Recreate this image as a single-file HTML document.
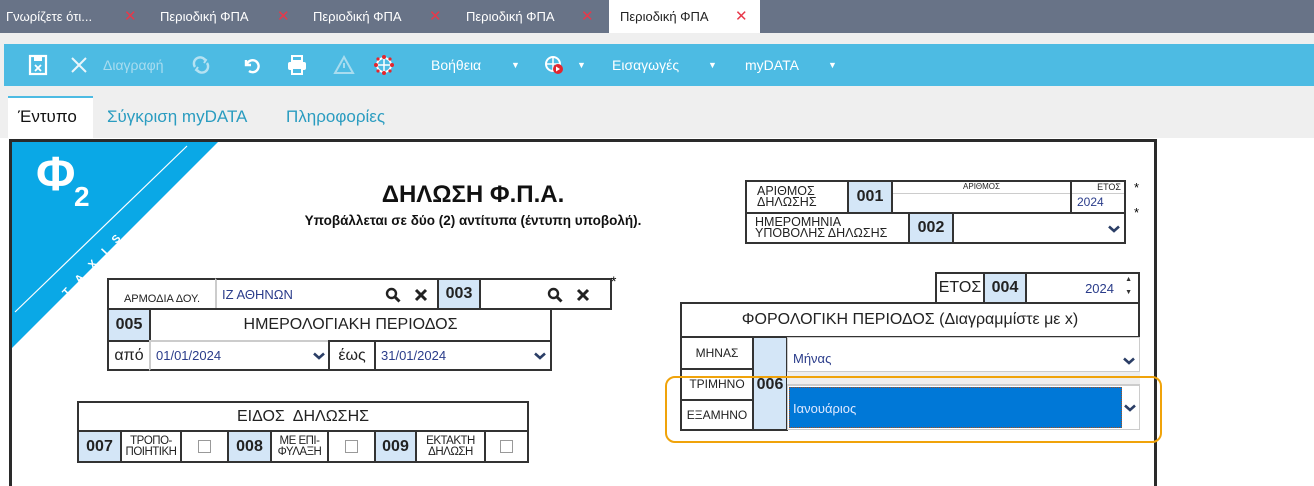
<!DOCTYPE html>
<html><head><meta charset="utf-8"><style>
*{margin:0;padding:0;box-sizing:border-box}
html,body{width:1314px;height:486px;overflow:hidden}
body{background:#efefef;font-family:"Liberation Sans","DejaVu Sans",sans-serif;position:relative}
.a{position:absolute}
.t{color:#fff;font-size:13px;top:9px;position:absolute}
.x{color:#e8384a;font-size:15px;font-weight:bold;top:7px;position:absolute}
.tb{color:#fff;font-size:14px;position:absolute;top:57px}
.c{position:absolute;border:2px solid #333;background:#fff;display:flex;align-items:center;justify-content:center;color:#222;text-align:center}
.n{background:#d4e6f7;font-weight:bold;font-size:16px}
.in{color:#2a3c8a;font-size:13px;justify-content:flex-start;padding-left:5px}
.sm{font-size:11.5px;line-height:11px;letter-spacing:-0.5px}
.cb{width:13px;height:13px;border:1px solid #999;background:#fff}
.chev{position:absolute}
</style></head><body>
<div class="a" style="left:0;top:0;width:1314px;height:33px;background:#687387"></div>
<div class="a" style="left:609px;top:0;width:151px;height:33px;background:#fff"></div>
<span class="t" style="left:6px">Γνωρίζετε ότι...</span><span class="x" style="left:124px">✕</span>
<span class="t" style="left:160px">Περιοδική ΦΠΑ</span><span class="x" style="left:277px">✕</span>
<span class="t" style="left:313px">Περιοδική ΦΠΑ</span><span class="x" style="left:429px">✕</span>
<span class="t" style="left:466px">Περιοδική ΦΠΑ</span><span class="x" style="left:581px">✕</span>
<span class="t" style="left:620px;color:#222">Περιοδική ΦΠΑ</span><span class="x" style="left:735px">✕</span>
<div class="a" style="left:4px;top:44px;width:1310px;height:42px;background:#4dbbe3"></div>
<svg class="a" style="left:28px;top:54px" width="20" height="22" viewBox="0 0 20 22"><rect x="2" y="2" width="16" height="18" fill="none" stroke="#fff" stroke-width="2.2"/><rect x="6" y="2" width="8" height="5" fill="#fff"/><path d="M7 11l6 6M13 11l-6 6" stroke="#fff" stroke-width="1.8"/></svg>
<svg class="a" style="left:71px;top:57px" width="16" height="16"><path d="M1 1l14 14M15 1L1 15" stroke="#eaf6fb" stroke-width="2"/></svg>
<span class="tb" style="left:103px;color:#a8dcef">Διαγραφή</span>
<svg class="a" style="left:191px;top:55px" width="20" height="20"><path d="M4 12a6 6 0 0 1 10-7M16 8a6 6 0 0 1-10 7" stroke="#b5e2f2" stroke-width="2.4" fill="none"/><path d="M12 3l3 2-2 3M8 17l-3-2 2-3" stroke="#b5e2f2" stroke-width="2" fill="none"/></svg>
<svg class="a" style="left:241px;top:55px" width="20" height="20"><path d="M5 5v5h5M6 9a6 6 0 1 1 2 7" stroke="#fff" stroke-width="2.4" fill="none"/></svg>
<svg class="a" style="left:286px;top:54px" width="22" height="22"><rect x="6" y="2" width="10" height="5" fill="none" stroke="#fff" stroke-width="2"/><rect x="2" y="8" width="18" height="8" rx="2" fill="#fff"/><rect x="6" y="14" width="10" height="6" fill="#4dbbe3" stroke="#fff" stroke-width="2"/></svg>
<svg class="a" style="left:333px;top:55px" width="22" height="20"><path d="M11 2L20 18H2Z" stroke="#a8dcef" stroke-width="2" fill="none"/><path d="M11 8v5" stroke="#a8dcef" stroke-width="2"/></svg>
<svg class="a" style="left:373px;top:54px" width="22" height="22"><circle cx="11" cy="11" r="7" stroke="#fff" stroke-width="2" fill="none"/><path d="M4 11h14M11 4v14" stroke="#fff" stroke-width="1.5"/><g fill="#e3262e"><circle cx="11" cy="3" r="2"/><circle cx="11" cy="19" r="2"/><circle cx="3" cy="11" r="2"/><circle cx="19" cy="11" r="2"/><circle cx="5" cy="5" r="1.6"/><circle cx="17" cy="17" r="1.6"/><circle cx="17" cy="5" r="1.6"/><circle cx="5" cy="17" r="1.6"/></g></svg>
<span class="tb" style="left:431px">Βοήθεια</span><span class="tb" style="left:511px;font-size:9px;top:60px">▼</span>
<svg class="a" style="left:543px;top:54px" width="22" height="22"><circle cx="10" cy="10" r="7" stroke="#fff" stroke-width="2" fill="none"/><path d="M3 10h14M10 3v14" stroke="#fff" stroke-width="1.5"/><circle cx="15" cy="15" r="5" fill="#e3262e"/><path d="M13 12.5v5l4-2.5z" fill="#fff"/></svg>
<span class="tb" style="left:577px;font-size:9px;top:60px">▼</span>
<span class="tb" style="left:612px">Εισαγωγές</span><span class="tb" style="left:708px;font-size:9px;top:60px">▼</span>
<span class="tb" style="left:745px">myDATA</span><span class="tb" style="left:828px;font-size:9px;top:60px">▼</span>
<div class="a" style="left:8px;top:96px;width:85px;height:42px;background:#fff;border-top:2px solid #4dbbe3"></div>
<span class="a" style="left:18px;top:107px;font-size:17px;color:#111">Έντυπο</span>
<span class="a" style="left:107px;top:107px;font-size:17px;color:#2a9cc0">Σύγκριση myDATA</span>
<span class="a" style="left:286px;top:107px;font-size:17px;color:#2a9cc0">Πληροφορίες</span>
<div class="a" style="left:0;top:138px;width:1314px;height:348px;background:#fff"></div>
<div class="a" style="left:9px;top:139px;width:1148px;height:360px;border:3px solid #2a2a2a;background:#fff"></div>
<svg class="a" style="left:12px;top:142px" width="210" height="210"><polygon points="0,0 206,0 0,206" fill="#0aa8e6"/><line x1="175" y1="4" x2="3" y2="170" stroke="#fff" stroke-width="1.2"/><text x="24" y="48" fill="#fff" font-size="48" font-weight="bold" font-family="Liberation Sans Narrow, Liberation Sans" transform="scale(1,1)">Φ</text><text x="62" y="64" fill="#fff" font-size="28" font-weight="bold" font-family="Liberation Sans">2</text><text transform="translate(55,155) rotate(-47)" fill="#fff" font-size="11" font-weight="bold" letter-spacing="12" font-family="Liberation Sans">TAXIS</text></svg>
<div class="a" style="left:300px;top:181px;width:346px;text-align:center;font-size:24px;font-weight:bold;color:#111">ΔΗΛΩΣΗ Φ.Π.Α.</div>
<div class="a" style="left:280px;top:213px;width:386px;text-align:center;font-size:13.5px;font-weight:bold;color:#111">Υποβάλλεται σε δύο (2) αντίτυπα (έντυπη υποβολή).</div>
<svg width="0" height="0" style="position:absolute"><defs>
<symbol id="cv" viewBox="0 0 12 8"><path d="M1 1.5l5 4.5 5-4.5" stroke="#2b3e66" stroke-width="2.6" fill="none"/></symbol>
<symbol id="sr" viewBox="0 0 16 16"><circle cx="6.5" cy="6.5" r="4.5" stroke="#222" stroke-width="2.4" fill="none"/><path d="M10 10l4.5 4.5" stroke="#222" stroke-width="3"/></symbol>
<symbol id="xx" viewBox="0 0 14 14"><path d="M2 2l10 10M12 2L2 12" stroke="#222" stroke-width="3"/></symbol>
</defs></svg>
<div class="c" style="left:107px;top:278px;width:110px;height:32px;font-size:11px;align-items:flex-end;padding-bottom:3px">ΑΡΜΟΔΙΑ ΔΟΥ.</div>
<div class="c in" style="left:215px;top:278px;width:224px;height:32px;border-color:#ccc;border-top-color:#333">ΙΖ ΑΘΗΝΩΝ<svg class="a" style="left:168px;top:7px" width="16" height="16"><use href="#sr"/></svg><svg class="a" style="left:197px;top:8px" width="14" height="14"><use href="#xx"/></svg></div>
<div class="c n" style="left:437px;top:278px;width:44px;height:32px">003</div>
<div class="c" style="left:479px;top:278px;width:133px;height:32px"><svg class="a" style="left:66px;top:7px" width="16" height="16"><use href="#sr"/></svg><svg class="a" style="left:95px;top:8px" width="14" height="14"><use href="#xx"/></svg></div>
<span class="a" style="left:611px;top:273px;font-size:14px">*</span>
<div class="c n" style="left:107px;top:308px;width:44px;height:34px">005</div>
<div class="c" style="left:149px;top:308px;width:403px;height:34px;font-size:16px">ΗΜΕΡΟΛΟΓΙΑΚΗ ΠΕΡΙΟΔΟΣ</div>
<div class="c" style="left:107px;top:340px;width:44px;height:31px;font-size:16px">από</div>
<div class="c in" style="left:149px;top:340px;width:181px;height:31px;border-color:#ccc;border-bottom-color:#333">01/01/2024<svg class="chev" style="left:162px;top:10px" width="12" height="8"><use href="#cv"/></svg></div>
<div class="c" style="left:328px;top:340px;width:48px;height:31px;font-size:16px">έως</div>
<div class="c in" style="left:374px;top:340px;width:178px;height:31px">31/01/2024<svg class="chev" style="left:158px;top:10px" width="12" height="8"><use href="#cv"/></svg></div>
<div class="c" style="left:77px;top:401px;width:452px;height:31px;font-size:16px">ΕΙΔΟΣ&nbsp; ΔΗΛΩΣΗΣ</div>
<div class="c n" style="left:77px;top:430px;width:45px;height:33px">007</div>
<div class="c sm" style="left:120px;top:430px;width:62px;height:33px">ΤΡΟΠΟ-<br>ΠΟΙΗΤΙΚΗ</div>
<div class="c" style="left:180px;top:430px;width:49px;height:33px"><div class="cb"></div></div>
<div class="c n" style="left:227px;top:430px;width:45px;height:33px">008</div>
<div class="c sm" style="left:270px;top:430px;width:59px;height:33px">ΜΕ ΕΠΙ-<br>ΦΥΛΑΞΗ</div>
<div class="c" style="left:327px;top:430px;width:49px;height:33px"><div class="cb"></div></div>
<div class="c n" style="left:374px;top:430px;width:43px;height:33px">009</div>
<div class="c sm" style="left:415px;top:430px;width:71px;height:33px">ΕΚΤΑΚΤΗ<br>ΔΗΛΩΣΗ</div>
<div class="c" style="left:484px;top:430px;width:45px;height:33px"><div class="cb"></div></div>
<div class="c" style="left:745px;top:180px;width:104px;height:34px;font-size:12.5px;line-height:11px;justify-content:flex-start;padding-left:10px;text-align:left">ΑΡΙΘΜΟΣ<br>ΔΗΛΩΣΗΣ</div>
<div class="c n" style="left:847px;top:180px;width:46px;height:34px">001</div>
<div class="c" style="left:891px;top:180px;width:181px;height:34px;align-items:flex-start;font-size:8px">ΑΡΙΘΜΟΣ<div class="a" style="left:0;top:11px;width:177px;border-top:1px solid #ccc"></div></div>
<div class="c" style="left:1070px;top:180px;width:56px;height:34px;align-items:flex-start;justify-content:flex-end;padding-right:3px;font-size:9px">ΕΤΟΣ<div class="a" style="left:0;top:11px;width:52px;border-top:1px solid #ccc"></div><span class="a" style="left:5px;top:13px;font-size:12px;color:#2a3c8a">2024</span></div>
<span class="a" style="left:1134px;top:180px;font-size:13px">*</span>
<div class="c" style="left:745px;top:212px;width:165px;height:32px;font-size:12.5px;line-height:11px;justify-content:flex-start;padding-left:8px;text-align:left">ΗΜΕΡΟΜΗΝΙΑ<br>ΥΠΟΒΟΛΗΣ ΔΗΛΩΣΗΣ</div>
<div class="c n" style="left:908px;top:212px;width:46px;height:32px">002</div>
<div class="c" style="left:952px;top:212px;width:174px;height:32px"><svg class="chev" style="left:154px;top:11px" width="12" height="8"><use href="#cv"/></svg></div>
<span class="a" style="left:1134px;top:205px;font-size:13px">*</span>
<div class="c" style="left:935px;top:272px;width:50px;height:32px;font-size:16px">ΕΤΟΣ</div>
<div class="c n" style="left:983px;top:272px;width:44px;height:32px">004</div>
<div class="c" style="left:1025px;top:272px;width:115px;height:32px;justify-content:flex-end;padding-right:24px;color:#2a3c8a;font-size:13px">2024<span class="a" style="right:6px;top:2px;font-size:7px;color:#333">▲</span><span class="a" style="right:6px;top:15px;font-size:7px;color:#333">▼</span></div>
<div class="c" style="left:680px;top:302px;width:460px;height:36px;font-size:16px">ΦΟΡΟΛΟΓΙΚΗ ΠΕΡΙΟΔΟΣ (Διαγραμμίστε με x)</div>
<div class="c" style="left:680px;top:336px;width:74px;height:34px;font-size:12px">ΜΗΝΑΣ</div>
<div class="c" style="left:680px;top:368px;width:74px;height:33px;font-size:12px;align-items:flex-start;padding-top:7px">ΤΡΙΜΗΝΟ</div>
<div class="c" style="left:680px;top:399px;width:74px;height:32px;font-size:12px">ΕΞΑΜΗΝΟ</div>
<div class="c n" style="left:752px;top:336px;width:36px;height:95px;align-items:flex-start;padding-top:38px">006</div>
<div class="c in" style="left:787px;top:337px;width:353px;height:35px;border:1px solid #ccc;padding-top:8px">Μήνας<svg class="chev" style="left:335px;top:19px" width="12" height="8"><use href="#cv"/></svg></div>
<div class="a" style="left:787px;top:372px;width:353px;height:13px;background:#eee;border-bottom:1px solid #ccc"></div>
<div class="a" style="left:787px;top:385px;width:353px;height:45px;background:#fff;border:1px solid #ccc"></div>
<div class="a" style="left:789px;top:387px;width:333px;height:41px;background:#0078d7;border:1px dotted #a05020;color:#dfe9ff;font-size:13px;padding:13px 0 0 3px">Ιανουάριος</div>
<svg class="chev" style="left:1124px;top:404px" width="12" height="8"><use href="#cv"/></svg>
<div class="a" style="left:665px;top:376px;width:497px;height:67px;border:2.5px solid #f0a30a;border-radius:10px"></div>
</body></html>
